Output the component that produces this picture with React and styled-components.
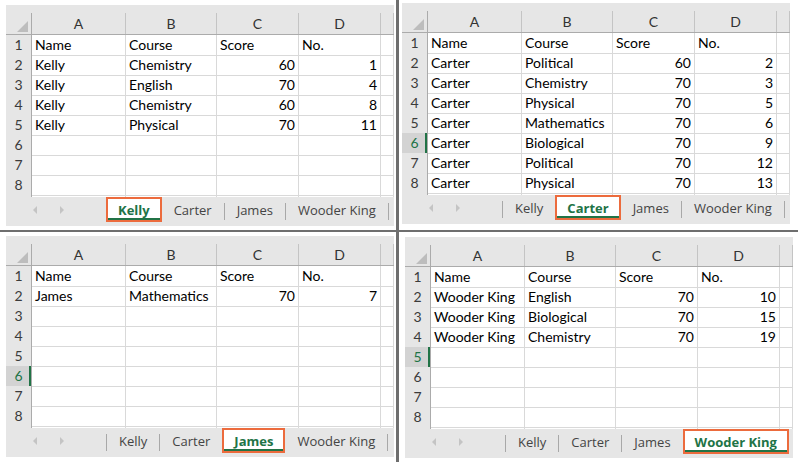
import styled, { createGlobalStyle } from 'styled-components'

const GlobalStyle = createGlobalStyle`
  html, body {
    margin: 0;
    padding: 0;
    background: #fff;
  }
  body {
    width: 798px;
    height: 462px;
    overflow: hidden;
    font-family: Lato, "Liberation Sans", sans-serif;
  }
`

const COLS = '26px 94px 91px 82px 82px 1fr'
const TABS = ['Kelly', 'Carter', 'James', 'Wooder King']

const Board = styled.div`
  display: grid;
  grid-template-columns: 396px 399px;
  grid-template-rows: 230px 230px;
  gap: 2px 3px;
  width: 798px;
  height: 462px;
  background: #6e6e6e;
`

const Quadrant = styled.div`
  background: #fff;
  padding: ${({ $top }) => $top}px 0 0 ${({ $left }) => $left}px;
  overflow: hidden;
`

const Sheet = styled.div`
  width: 388px;
  display: flex;
  flex-direction: column;
`

const TopStrip = styled.div`
  height: 8px;
  background: #e6e6e6;
`

const HeaderRow = styled.div`
  display: grid;
  grid-template-columns: ${COLS};
  height: 21px;
  background: #e6e6e6;
  border-bottom: 1px solid #ababab;
`

const Corner = styled.div`
  position: relative;
  border-right: 1px solid #ababab;

  &::after {
    content: '';
    position: absolute;
    right: 3px;
    bottom: 2px;
    width: 0;
    height: 0;
    border-left: 11px solid transparent;
    border-bottom: 11px solid #bdbdbd;
  }
`

const ColHead = styled.div`
  border-right: 1px solid #c4c4c4;
  color: #333;
  font-size: 14px;
  line-height: 21px;
  text-align: center;
`

const Grid = styled.div`
  height: 162px;
  overflow: hidden;
  background: #fff;
`

const Row = styled.div`
  display: grid;
  grid-template-columns: ${COLS};
  height: 20px;
`

const RowHead = styled.div`
  background: ${({ $selected }) => ($selected ? '#d3d3d3' : '#e6e6e6')};
  color: ${({ $selected }) => ($selected ? '#217346' : '#3b3b3b')};
  border-right: 1px solid #ababab;
  border-bottom: 1px solid #cdcdcd;
  box-shadow: ${({ $selected }) => ($selected ? 'inset -2px 0 0 #217346' : 'none')};
  font-size: 14px;
  line-height: 20px;
  text-align: center;
`

const Cell = styled.div`
  border-right: 1px solid #d9d9d9;
  border-bottom: 1px solid #d9d9d9;
  padding: 0 3px;
  color: #000;
  font-size: 14px;
  line-height: 20px;
  white-space: nowrap;
  overflow: hidden;
  text-align: ${({ $num }) => ($num ? 'right' : 'left')};
`

const TabBar = styled.div`
  display: flex;
  align-items: flex-start;
  height: 29px;
  background: #e6e6e6;
  overflow: hidden;
`

const Nav = styled.div`
  display: flex;
  align-items: center;
  gap: 23px;
  width: 100px;
  height: 26px;
  padding-left: 27px;
  box-sizing: border-box;
  flex-shrink: 0;
`

const Arrow = styled.span`
  width: 0;
  height: 0;
  border-top: 4px solid transparent;
  border-bottom: 4px solid transparent;
  ${({ $dir }) =>
    $dir === 'left' ? 'border-right: 4px solid #c4c4c4;' : 'border-left: 4px solid #c4c4c4;'}
`

const Tab = styled.div`
  display: flex;
  align-items: center;
  flex-shrink: 0;
  height: 25px;
  box-sizing: border-box;
  padding: 0 12px;
  font-family: "Open Sans", "Noto Sans", sans-serif;
  font-size: 13px;
  color: #444;
  white-space: nowrap;

  ${({ $active }) =>
    $active &&
    `
    padding: 0 10px;
    background: #fff;
    border: 2px solid #ec6b3d;
    box-shadow: inset 0 -2px 0 #217346;
    color: #217346;
    font-weight: 700;
  `}
`

const Sep = styled.div`
  width: 1px;
  height: 17px;
  margin-top: 6px;
  background: #a8a8a8;
  flex-shrink: 0;
`

const sheets = [
  {
    name: 'Kelly',
    top: 5,
    left: 6,
    selected: 0,
    rows: [
      ['Kelly', 'Chemistry', 60, 1],
      ['Kelly', 'English', 70, 4],
      ['Kelly', 'Chemistry', 60, 8],
      ['Kelly', 'Physical', 70, 11],
    ],
  },
  {
    name: 'Carter',
    top: 3,
    left: 3,
    selected: 6,
    rows: [
      ['Carter', 'Political', 60, 2],
      ['Carter', 'Chemistry', 70, 3],
      ['Carter', 'Physical', 70, 5],
      ['Carter', 'Mathematics', 70, 6],
      ['Carter', 'Biological', 70, 9],
      ['Carter', 'Political', 70, 12],
      ['Carter', 'Physical', 70, 13],
    ],
  },
  {
    name: 'James',
    top: 4,
    left: 6,
    selected: 6,
    rows: [['James', 'Mathematics', 70, 7]],
  },
  {
    name: 'Wooder King',
    top: 5,
    left: 6,
    selected: 5,
    rows: [
      ['Wooder King', 'English', 70, 10],
      ['Wooder King', 'Biological', 70, 15],
      ['Wooder King', 'Chemistry', 70, 19],
    ],
  },
]

function SheetTabs({ active }) {
  const items = []
  TABS.forEach((t, i) => {
    const prevActive = i > 0 && TABS[i - 1] === active
    if (t !== active && !prevActive) items.push(<Sep key={'s' + i} />)
    items.push(
      <Tab key={t} $active={t === active}>
        {t}
      </Tab>
    )
  })
  if (TABS[TABS.length - 1] !== active) items.push(<Sep key="end" />)

  return (
    <TabBar>
      <Nav>
        <Arrow $dir="left" />
        <Arrow $dir="right" />
      </Nav>
      {items}
    </TabBar>
  )
}

function Worksheet({ sheet }) {
  const body = [['Name', 'Course', 'Score', 'No.'], ...sheet.rows]
  // eight visible rows plus the sliver of row 9 under them
  const lines = Array.from({ length: 9 }, (_, i) => body[i] || [])

  return (
    <Sheet>
      <TopStrip />
      <HeaderRow>
        <Corner />
        {['A', 'B', 'C', 'D', ''].map((c, i) => (
          <ColHead key={i}>{c}</ColHead>
        ))}
      </HeaderRow>
      <Grid>
        {lines.map((r, i) => (
          <Row key={i}>
            <RowHead $selected={sheet.selected === i + 1}>{i < 8 ? i + 1 : ''}</RowHead>
            {[0, 1, 2, 3].map((c) => (
              <Cell key={c} $num={typeof r[c] === 'number'}>
                {r[c]}
              </Cell>
            ))}
            <Cell />
          </Row>
        ))}
      </Grid>
      <SheetTabs active={sheet.name} />
    </Sheet>
  )
}

export default function App() {
  return (
    <>
      <GlobalStyle />
      <Board>
        {sheets.map((s) => (
          <Quadrant key={s.name} $top={s.top} $left={s.left}>
            <Worksheet sheet={s} />
          </Quadrant>
        ))}
      </Board>
    </>
  )
}
